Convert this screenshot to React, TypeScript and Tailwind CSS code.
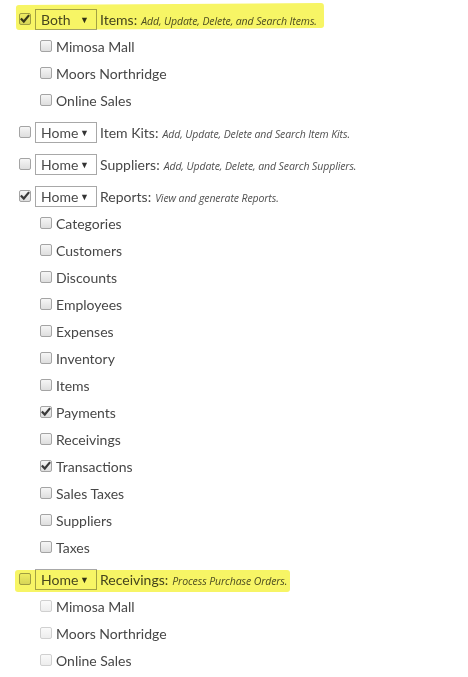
import React from 'react';

type Sub = { label: string; checked?: boolean };
type Perm = {
  mode: string;
  title: string;
  desc: string;
  checked?: boolean;
  highlight?: 'top' | 'bottom';
  disabledSubs?: boolean;
  subs?: Sub[];
};

const perms: Perm[] = [
  {
    mode: 'Both',
    title: 'Items:',
    desc: 'Add, Update, Delete, and Search Items.',
    checked: true,
    highlight: 'top',
    subs: [{ label: 'Mimosa Mall' }, { label: 'Moors Northridge' }, { label: 'Online Sales' }],
  },
  { mode: 'Home', title: 'Item Kits:', desc: 'Add, Update, Delete and Search Item Kits.' },
  { mode: 'Home', title: 'Suppliers:', desc: 'Add, Update, Delete, and Search Suppliers.' },
  {
    mode: 'Home',
    title: 'Reports:',
    desc: 'View and generate Reports.',
    checked: true,
    subs: [
      { label: 'Categories' },
      { label: 'Customers' },
      { label: 'Discounts' },
      { label: 'Employees' },
      { label: 'Expenses' },
      { label: 'Inventory' },
      { label: 'Items' },
      { label: 'Payments', checked: true },
      { label: 'Receivings' },
      { label: 'Transactions', checked: true },
      { label: 'Sales Taxes' },
      { label: 'Suppliers' },
      { label: 'Taxes' },
    ],
  },
  {
    mode: 'Home',
    title: 'Receivings:',
    desc: 'Process Purchase Orders.',
    highlight: 'bottom',
    disabledSubs: true,
    subs: [{ label: 'Mimosa Mall' }, { label: 'Moors Northridge' }, { label: 'Online Sales' }],
  },
];

function Box({ checked, disabled }: { checked?: boolean; disabled?: boolean }) {
  return (
    <span
      className={
        disabled
          ? 'relative w-[12px] h-[12px] shrink-0 rounded-[2px] border border-[#d0d0d0] bg-gradient-to-b from-[#fafafa] to-[#ededed]'
          : 'relative w-[12px] h-[12px] shrink-0 rounded-[2px] border border-[#a4a4a4] bg-gradient-to-b from-[#f6f6f6] to-[#dedede]'
      }
    >
      {checked && (
        <svg className="absolute -left-[1px] -top-[1px] w-[12px] h-[12px]" viewBox="0 0 12 12">
          <path d="M2.6 6.2 L4.8 8.5 L9.4 3" fill="none" stroke="#3a3a3a" strokeWidth={2.2} strokeLinecap="square" />
        </svg>
      )}
    </span>
  );
}

function Select({ value }: { value: string }) {
  return (
    <span className="flex items-center justify-between w-[62px] h-[21px] shrink-0 border border-[#a8a8a8] bg-white pl-[5px] pr-[7px] text-[14px] text-[#4a4a4a]">
      <span>{value}</span>
      <span className="text-[9px] text-[#333] leading-none">▼</span>
    </span>
  );
}

export default function App() {
  return (
    <div
      className="w-[468px] min-h-[677px] bg-white pl-[19px] pt-[5.5px] text-[#474747]"
      style={{ fontFamily: 'Lato, "Open Sans", sans-serif' }}
    >
      {perms.map((p, i) => (
        <div key={p.title} className={i === 0 ? '' : 'mt-[5px]'}>
          <div className="relative flex items-center h-[27px]">
            <Box checked={p.checked} />
            <span className="ml-[4px]">
              <Select value={p.mode} />
            </span>
            <span className="ml-[3px] flex items-baseline whitespace-nowrap">
              <span className="text-[14px]">{p.title}</span>
              <span
                className="ml-[4px] text-[10.5px] italic text-[#505050] tracking-[-0.1px]"
                style={{ fontFamily: '"Open Sans", sans-serif' }}
              >
                {p.desc}
              </span>
            </span>
            {p.highlight === 'top' && (
              <span className="pointer-events-none absolute left-[-3px] top-[-1.5px] w-[308px] h-[25px] bg-[#f7f565] mix-blend-multiply rounded-[3px] -rotate-[0.4deg]" />
            )}
            {p.highlight === 'bottom' && (
              <span className="pointer-events-none absolute left-[-4px] top-[4.5px] w-[275px] h-[22px] bg-[#f7f565] mix-blend-multiply rounded-[3px]" />
            )}
          </div>
          {p.subs && (
            <div className="pl-[21px]">
              {p.subs.map((s) => (
                <div key={s.label} className="flex items-center h-[27px]">
                  <Box checked={s.checked} disabled={p.disabledSubs} />
                  <span className="ml-[4px] text-[14px] text-[#474747]">{s.label}</span>
                </div>
              ))}
            </div>
          )}
        </div>
      ))}
    </div>
  );
}
